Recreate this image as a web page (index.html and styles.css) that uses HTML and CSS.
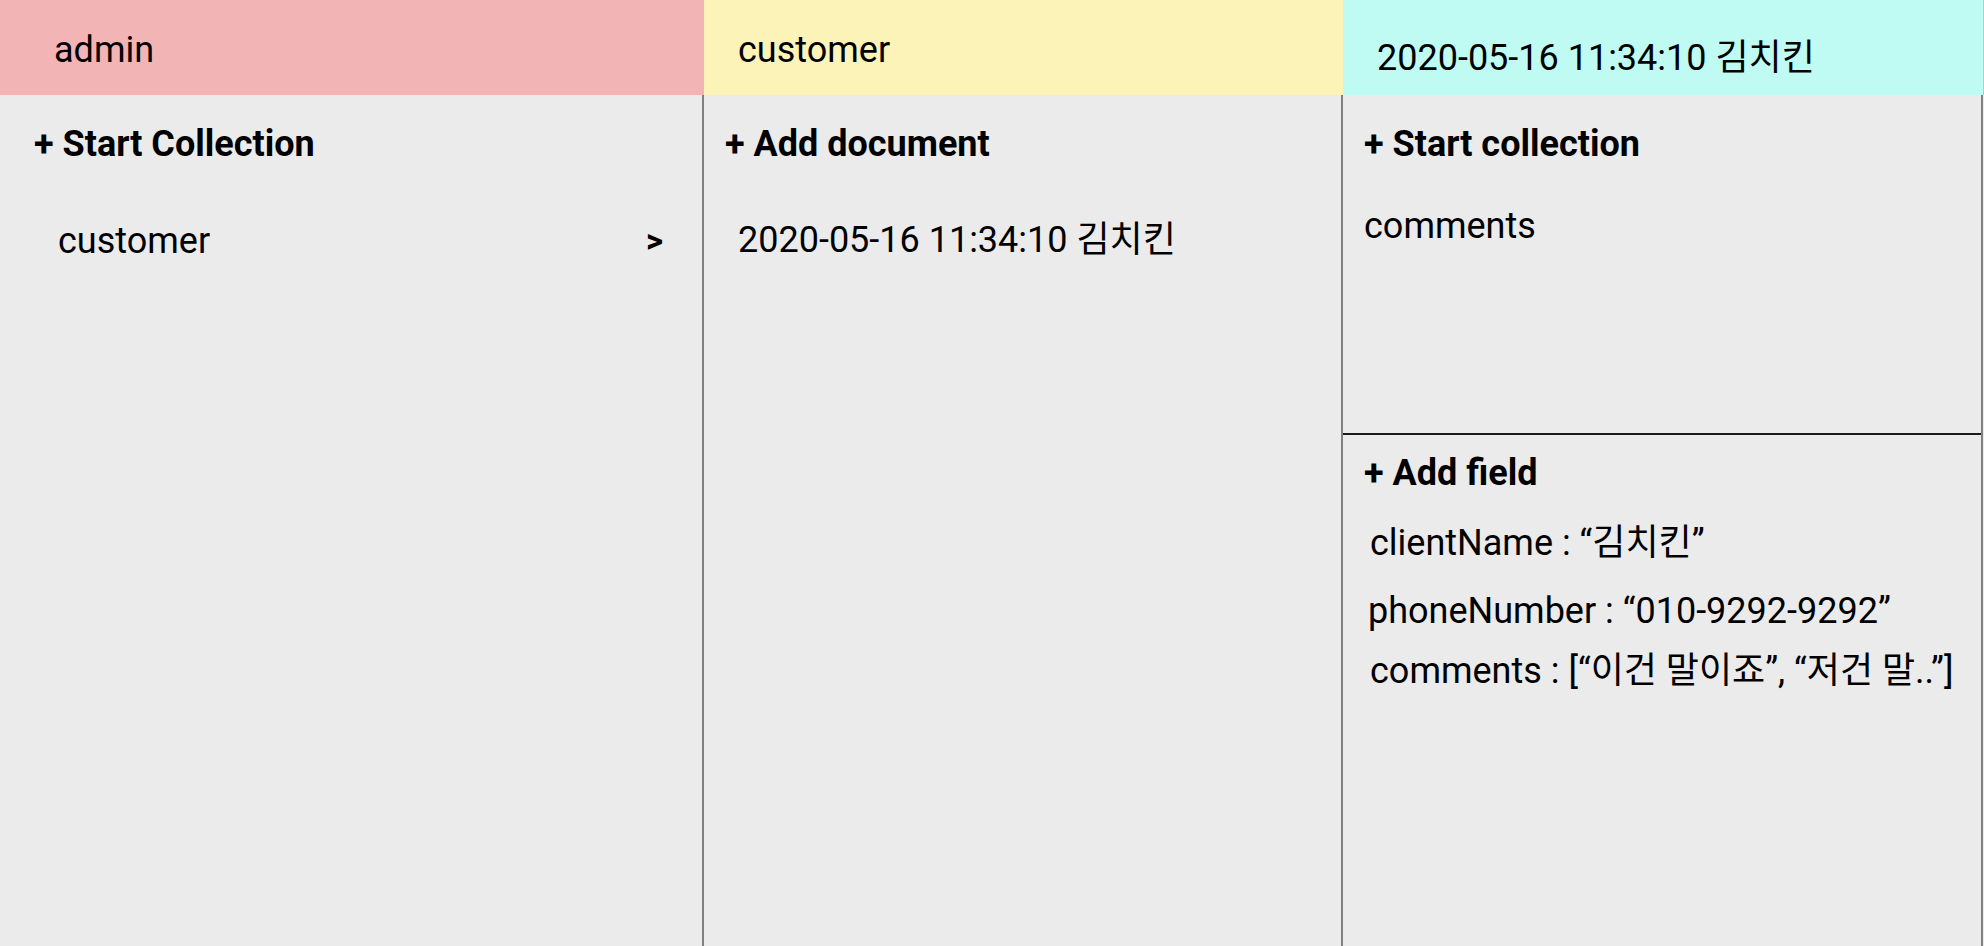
FILE: index.html
```html
<!DOCTYPE html>
<html lang="ko">
<head>
<meta charset="utf-8">
<title>Firestore</title>
<link rel="stylesheet" href="styles.css">
</head>
<body>
<div class="board">
  <section class="col col-root">
    <header class="col-head head-pink"><span class="head-text">admin</span></header>
    <div class="col-body">
      <div class="action">+ Start Collection</div>
      <div class="item item-link"><span>customer</span><span class="chev">&gt;</span></div>
    </div>
  </section>
  <section class="col col-coll">
    <header class="col-head head-yellow"><span class="head-text">customer</span></header>
    <div class="col-body">
      <div class="action">+ Add document</div>
      <div class="item item-doc">2020-05-16 11:34:10 김치킨</div>
    </div>
  </section>
  <section class="col col-doc">
    <header class="col-head head-cyan"><span class="head-text head-low">2020-05-16 11:34:10 김치킨</span></header>
    <div class="col-body split">
      <div class="sub-colls">
        <div class="action">+ Start collection</div>
        <div class="item item-sub">comments</div>
      </div>
      <div class="fields">
        <div class="action">+ Add field</div>
        <div class="field f1">clientName : “김치킨”</div>
        <div class="field f2">phoneNumber : “010-9292-9292”</div>
        <div class="field f3">comments : [“이건 말이죠”, “저건 말..”]</div>
      </div>
    </div>
  </section>
  <section class="col col-rest">
    <header class="col-head head-lav"></header>
    <div class="col-body rest-body"></div>
  </section>
</div>
</body>
</html>
```
FILE: styles.css
```css
html, body {
  margin: 0;
  padding: 0;
  height: 100%;
}
body {
  font-family: Roboto, "Noto Sans CJK KR", sans-serif;
  color: #000;
  background: #eaeaea;
  overflow: hidden;
}
.board {
  display: flex;
  height: 946px;
}
.col {
  display: flex;
  flex-direction: column;
}
.col-root { width: 704px; }
.col-coll { width: 639px; }
.col-doc { width: 640px; }
.col-rest { flex: 1; }

.col-head {
  height: 95px;
  flex: none;
  display: flex;
  align-items: flex-start;
  box-sizing: border-box;
  padding-top: 29px;
  padding-left: 54px;
}
.head-pink { background: #f2b4b5; padding-left: 54px; }
.head-yellow { background: #fcf3b8; padding-left: 34px; }
.head-cyan { background: #bffbf3; padding-left: 34px; }
.head-lav { background: #c9baf6; padding: 0; }
.head-text {
  font-size: 36px;
  line-height: 42px;
}
.head-low { padding-top: 8px; }

.col-body {
  flex: 1;
  background: #ebebeb;
  border-right: 2px solid #808080;
  box-sizing: border-box;
  padding: 28px 0 0 21px;
}
.col-root .col-body { padding-left: 34px; }
.rest-body { border-right: none; padding: 0; }

.action {
  font-weight: 700;
  font-size: 36px;
  line-height: 42px;
}
.item {
  font-size: 36px;
  line-height: 42px;
}
.item-link {
  margin-top: 55px;
  padding-left: 24px;
  padding-right: 39px;
  display: flex;
  justify-content: space-between;
}
.chev { font-weight: 700; font-size: 33px; }
.item-doc { margin-top: 54px; padding-left: 13px; }

.split {
  padding: 0;
  display: flex;
  flex-direction: column;
}
.sub-colls {
  height: 340px;
  box-sizing: border-box;
  padding: 28px 0 0 21px;
  border-bottom: 2px solid #1a1a1a;
}
.item-sub { margin-top: 40px; }
.fields {
  padding: 17px 0 0 21px;
}
.field {
  font-size: 36px;
  line-height: 42px;
}
.f1 { margin-top: 28px; padding-left: 6px; }
.f2 { margin-top: 26px; padding-left: 4px; }
.f3 { margin-top: 18px; padding-left: 6px; }
```
